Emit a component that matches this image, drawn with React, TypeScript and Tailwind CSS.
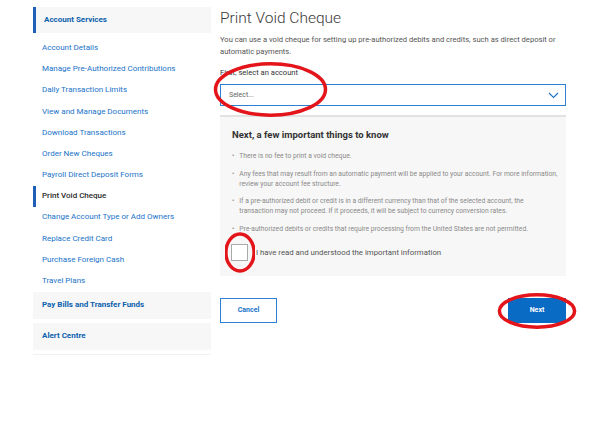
import React from "react";

const menuItems = [
  "Account Details",
  "Manage Pre-Authorized Contributions",
  "Daily Transaction Limits",
  "View and Manage Documents",
  "Download Transactions",
  "Order New Cheques",
  "Payroll Direct Deposit Forms",
  "Print Void Cheque",
  "Change Account Type or Add Owners",
  "Replace Credit Card",
  "Purchase Foreign Cash",
  "Travel Plans",
];

const notes = [
  "There is no fee to print a void cheque.",
  "Any fees that may result from an automatic payment will be applied to your account. For more information, review your account fee structure.",
  "If a pre-authorized debit or credit is in a different currency than that of the selected account, the transaction may not proceed. If it proceeds, it will be subject to currency conversion rates.",
  "Pre-authorized debits or credits that require processing from the United States are not permitted.",
];

function Sidebar() {
  return (
    <aside className="w-[178px] shrink-0">
      <div className="flex h-[26px] items-center border-l-[3px] border-[#1f5fb8] bg-[#f7f7f7] pl-[8px] text-[8px] font-bold text-[#0b5fad]">
        Account Services
      </div>
      <ul className="mt-[4.4px]">
        {menuItems.map((item) => {
          const active = item === "Print Void Cheque";
          return (
            <li
              key={item}
              className={
                active
                  ? "flex h-[21.2px] items-center border-l-[3px] border-[#1f5fb8] pl-[6px] text-[8px] font-medium text-[#2a2a2a]"
                  : "flex h-[21.2px] items-center pl-[9px] text-[8px] text-[#1a73c9]"
              }
            >
              {item}
            </li>
          );
        })}
      </ul>
      <div className="flex h-[27px] items-center bg-[#f7f7f7] pl-[9px] text-[8px] font-bold text-[#0b5fad]">
        Pay Bills and Transfer Funds
      </div>
      <div className="mt-[4px] flex h-[27px] items-center bg-[#f7f7f7] pl-[9px] text-[8px] font-bold text-[#0b5fad]">
        Alert Centre
      </div>
      <div className="mt-[4px] h-[1px] bg-[#f1f1f1]" />
    </aside>
  );
}

function Chevron() {
  return (
    <svg width="11" height="7" viewBox="0 0 11 7" fill="none">
      <path d="M1 1l4.5 4.5L10 1" stroke="#1a73c9" strokeWidth="1.1" />
    </svg>
  );
}

function Ring({ className }: { className: string }) {
  return (
    <svg className={`absolute ${className}`} viewBox="0 0 100 100" preserveAspectRatio="none" fill="none">
      <ellipse cx="50" cy="50" rx="47" ry="45" stroke="#e3151a" strokeWidth="3.5" vectorEffect="non-scaling-stroke" />
    </svg>
  );
}

export default function App() {
  return (
    <div
      className="relative flex h-[428px] w-[600px] gap-[9px] overflow-hidden bg-white pl-[33px] pt-[7px]"
      style={{ fontFamily: "Roboto, 'Liberation Sans', sans-serif" }}
    >
      <Sidebar />

      <main className="w-[346px] shrink-0">
        <h1 className="h-[22px] text-[15.5px] font-light leading-[22px] text-[#3a3a3a]">Print Void Cheque</h1>
        <p className="mt-[5px] h-[24px] pr-[4px] text-[7.6px] leading-[12px] text-[#555]">
          You can use a void cheque for setting up pre-authorized debits and credits, such as direct deposit or automatic payments.
        </p>
        <label className="mt-[9px] block h-[12px] text-[7.6px] leading-[12px] text-[#333]">First, select an account</label>
        <div className="mt-[5px] flex h-[22px] items-center justify-between border border-[#2f7fd0] bg-white pl-[8px] pr-[6px] text-[7px] text-[#666]">
          <span>Select...</span>
          <Chevron />
        </div>

        <section className="mt-[9px] border-t-[2px] border-[#e2e2e2] bg-[#f7f7f7] pb-[15px] pl-[12px] pr-[8px] pt-[11px]">
          <h2 className="h-[14px] text-[9.5px] font-bold leading-[14px] text-[#333]">Next, a few important things to know</h2>
          <ul className="mt-[9px] flex flex-col gap-[7.7px]">
            {notes.map((n) => (
              <li key={n} className="flex gap-[5px] text-[6.75px] leading-[10px] text-[#8a8a8a]">
                <span className="shrink-0">•</span>
                <span>{n}</span>
              </li>
            ))}
          </ul>
          <label className="-ml-[1px] mt-[10px] flex items-center gap-[8px]">
            <span className="block h-[17px] w-[17px] border border-[#aaa] bg-white" />
            <span className="text-[7.8px] text-[#555]">I have read and understood the important information</span>
          </label>
        </section>

        <div className="mt-[22px] flex justify-between">
          <button className="h-[25px] w-[57px] border-[1.5px] border-[#2f7fd0] bg-white text-[7px] font-bold text-[#1a73c9]">
            Cancel
          </button>
          <button className="h-[25px] w-[58px] bg-[#0a6bc4] text-[7px] font-bold text-white">Next</button>
        </div>
      </main>

      <Ring className="left-[212px] top-[61px] h-[57px] w-[117px]" />
      <Ring className="left-[225px] top-[232px] h-[41px] w-[30px]" />
      <Ring className="left-[497px] top-[293px] h-[36px] w-[80px]" />
    </div>
  );
}
